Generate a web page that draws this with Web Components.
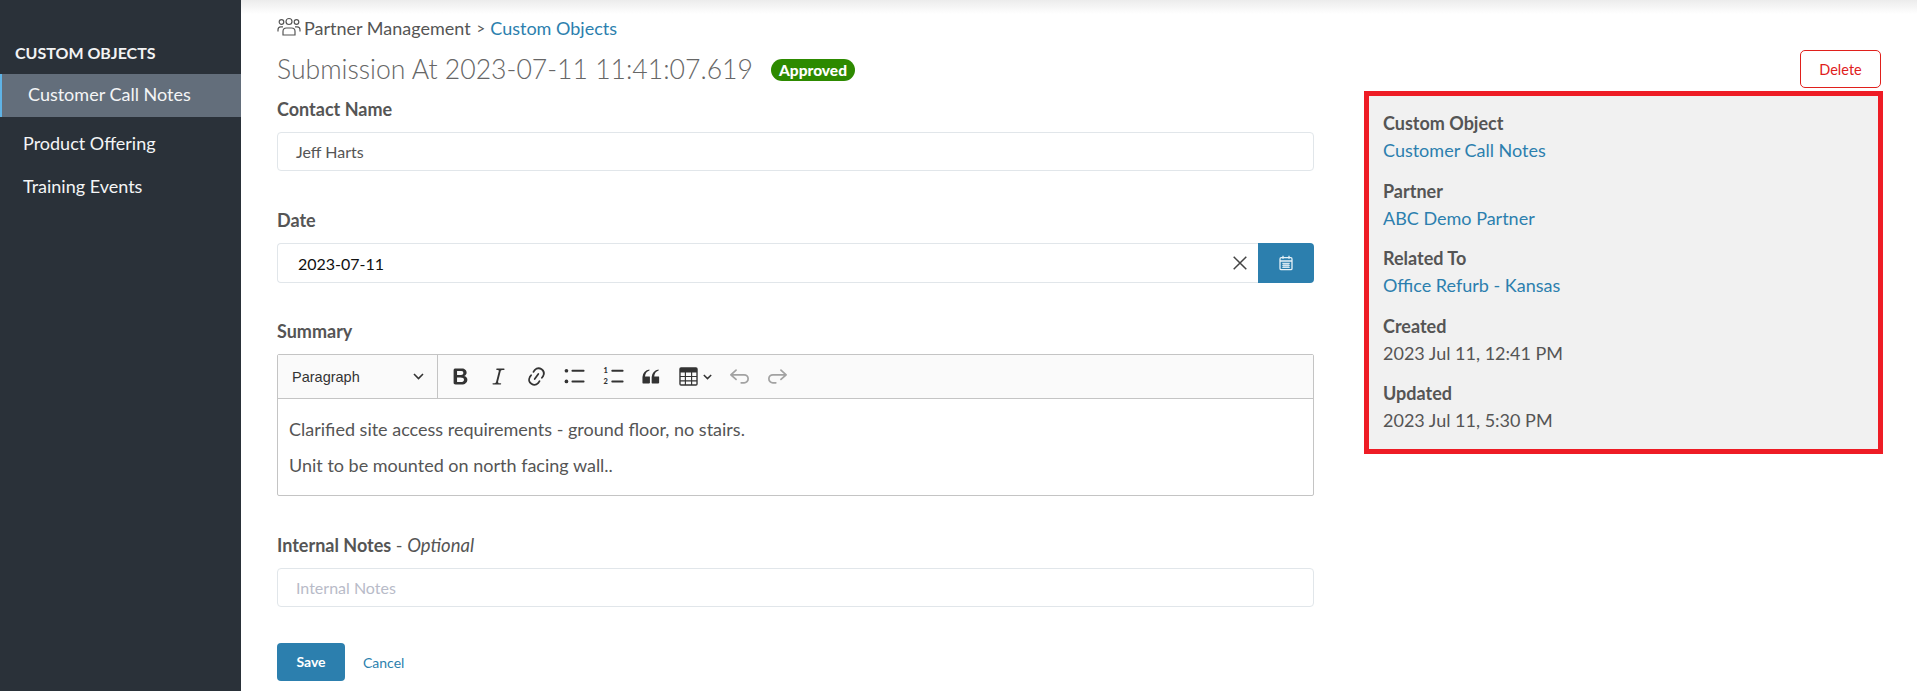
<!DOCTYPE html>
<html>
<head>
<meta charset="utf-8">
<title>Submission</title>
<style>
html,body{margin:0;height:100%;background:#fff;}
body{font-family:Lato,"Liberation Sans",sans-serif;font-size:16px;color:#555;overflow:hidden;}
</style>
</head>
<body>
<app-shell>
  <side-nav slot="nav" heading="CUSTOM OBJECTS">
    <nav-item active>Customer Call Notes</nav-item>
    <nav-item>Product Offering</nav-item>
    <nav-item>Training Events</nav-item>
  </side-nav>
  <bread-crumb slot="crumb" parent="Partner Management" current="Custom Objects"></bread-crumb>
  <page-title slot="title" badge="Approved">Submission At 2023-07-11 11:41:07.619</page-title>

  <form-field slot="form" label="Contact Name"><text-box value="Jeff Harts"></text-box></form-field>
  <form-field slot="form" label="Date" style="margin-bottom:37px"><date-box value="2023-07-11"></date-box></form-field>
  <form-field slot="form" label="Summary">
    <rich-editor>
      <p>Clarified site access requirements - ground floor, no stairs.</p>
      <p>Unit to be mounted on north facing wall..</p>
    </rich-editor>
  </form-field>
  <form-field slot="form" label="Internal Notes" hint="Optional"><text-box placeholder="Internal Notes"></text-box></form-field>
  <form-actions slot="form"></form-actions>

  <info-panel slot="aside">
    <info-row label="Custom Object" value="Customer Call Notes" link></info-row>
    <info-row label="Partner" value="ABC Demo Partner" link></info-row>
    <info-row label="Related To" value="Office Refurb - Kansas" link></info-row>
    <info-row label="Created" value="2023 Jul 11, 12:41 PM"></info-row>
    <info-row label="Updated" value="2023 Jul 11, 5:30 PM"></info-row>
  </info-panel>
</app-shell>

<script>
// little helper, every element below does the same thing in its constructor
class Base extends HTMLElement{
  constructor(html){
    super()
    this.attachShadow({mode:'open'})
    const t=document.createElement('template')
    t.innerHTML=html
    this.shadowRoot.appendChild(t.content.cloneNode(true))
  }
  attr(name,fallback=''){ return this.getAttribute(name)||fallback }
}

class AppShell extends Base{
  constructor(){
    super(`<style>
      :host{display:flex;height:691px;width:100%;}
      .nav{flex:0 0 241px;}
      .main{flex:1;display:flex;min-width:0;background:linear-gradient(#ececec,#fff 14px);}
      .left{flex:0 0 1037px;margin-left:36px;padding-top:16px;box-sizing:border-box;}
      .right{flex:0 0 519px;margin-left:50px;padding-top:50px;box-sizing:border-box;}
      .tools{display:flex;justify-content:flex-end;padding-right:2px;height:41px;}
      .del{box-sizing:border-box;width:81px;height:38px;border:1px solid #e0201c;border-radius:5px;background:#fff;color:#e0201c;
        font:14.5px Lato,sans-serif;display:flex;align-items:center;justify-content:center;}
    </style>
    <div class="nav"><slot name="nav"></slot></div>
    <div class="main">
      <div class="left"><slot name="crumb"></slot><slot name="title"></slot><slot name="form"></slot></div>
      <div class="right">
        <div class="tools"><div class="del">Delete</div></div>
        <slot name="aside"></slot>
      </div>
    </div>`)
  }
}

class SideNav extends Base{
  constructor(){
    super(`<style>
      :host{display:block;height:100%;background:#2a3139;color:#fff;padding-top:43px;box-sizing:border-box;}
      h4{margin:0;padding:0 0 0 15px;height:31px;line-height:20px;font-size:16px;font-weight:700;color:#f2f3f4;}
    </style><h4></h4><slot></slot>`)
  }
  connectedCallback(){ this.shadowRoot.querySelector('h4').textContent=this.attr('heading') }
}

class NavItem extends Base{
  constructor(){
    super(`<style>
      :host{display:block;height:43px;line-height:42px;padding-left:23px;color:#f4f5f6;font-size:18px;box-sizing:border-box;}
      :host([active]){background:#636e7b;border-left:2px solid #5fb3e6;padding-left:26px;line-height:41px;margin-bottom:5px;}
    </style><slot></slot>`)
  }
}

class BreadCrumb extends Base{
  constructor(){
    super(`<style>
      :host{display:flex;align-items:center;height:24px;font-size:18px;color:#555;}
      svg{width:24px;height:22px;margin-right:3px;}
      a{color:#2c7fae;margin-left:5px;}
      .sep{margin-left:6px;font-size:15px;}
    </style>
    <svg viewBox="0 0 24 22" fill="none" stroke="#555" stroke-width="1.2">
      <circle cx="4.5" cy="5" r="2.3"/><circle cx="12" cy="4.5" r="3"/><circle cx="19.5" cy="5" r="2.3"/>
      <path d="M1 14.5v-1.7c0-1.7 1.2-2.9 2.8-2.9h2.2"/><path d="M23 14.500v-1.700c0-1.700-1.200-2.900-2.800-2.900H18"/>
      <path d="M6 18v-3.600c0-2.200 1.500-3.400 3.400-3.400h5.200c1.900 0 3.400 1.200 3.400 3.400V18z"/>
    </svg><span class="p"></span><span class="sep">&gt;</span><a></a>`)
  }
  connectedCallback(){
    this.shadowRoot.querySelector('.p').textContent=this.attr('parent')
    this.shadowRoot.querySelector('a').textContent=this.attr('current')
  }
}

class PageTitle extends Base{
  constructor(){
    super(`<style>
      :host{display:flex;align-items:center;height:44px;margin-top:7px;margin-bottom:7px;color:#666;}
      h2{margin:0;font-size:26.6px;font-weight:300;white-space:nowrap;}
      .badge{margin-left:18px;margin-top:2px;background:#2d8a00;color:#fff;font-size:15.5px;font-weight:900;border-radius:11px;padding:0 8px;height:22px;line-height:22px;}
    </style><h2><slot></slot></h2><span class="badge"></span>`)
  }
  connectedCallback(){ this.shadowRoot.querySelector('.badge').textContent=this.attr('badge') }
}

class FormField extends Base{
  constructor(){
    super(`<style>
      :host{display:block;margin-bottom:38px;}
      label{display:block;height:24px;line-height:23px;margin-bottom:10px;font-size:18px;font-weight:700;color:#555;}
      span{font-weight:400;}
      i{font-weight:400;font-size:18.500px;}
    </style><label></label><slot></slot>`)
  }
  connectedCallback(){
    const l=this.shadowRoot.querySelector('label')
    l.textContent=this.attr('label')
    if(this.hasAttribute('hint')){
      const s=document.createElement('span')
      s.innerHTML=' - <i></i>'
      s.querySelector('i').textContent=this.attr('hint')
      l.appendChild(s)
    }
  }
}

class TextBox extends Base{
  constructor(){
    super(`<style>
      :host{display:block;}
      .box{box-sizing:border-box;height:39px;border:1px solid #e1e6ea;border-radius:4px;padding:0 18px;line-height:37px;font-size:16px;color:#555;}
      .ph{color:#b8bbc8;}
    </style><div class="box"></div>`)
  }
  connectedCallback(){
    const b=this.shadowRoot.querySelector('.box')
    if(this.hasAttribute('value')) b.textContent=this.attr('value')
    else{ b.textContent=this.attr('placeholder'); b.classList.add('ph') }
  }
}

class DateBox extends Base{
  constructor(){
    super(`<style>
      :host{display:flex;height:40px;}
      .box{flex:1;box-sizing:border-box;border:1px solid #e1e6ea;border-right:0;border-radius:4px 0 0 4px;padding:0 11px 0 20px;display:flex;align-items:center;justify-content:space-between;font-size:16px;color:#111;}
      .box svg{width:14px;height:14px;}
      .btn{flex:0 0 56px;background:#2c7fae;border-radius:0 4px 4px 0;display:flex;align-items:center;justify-content:center;}
      .btn svg{width:14px;height:16px;}
    </style>
    <div class="box"><span class="v"></span>
      <svg viewBox="0 0 14 14" fill="none" stroke="#444" stroke-width="1.5"><path d="M.7.7l12.600 12.600M13.300.7L.7 13.300"/></svg>
    </div>
    <div class="btn">
      <svg viewBox="0 0 14 16" fill="none" stroke="#e6f1f7" stroke-width="1.3">
        <rect x="1" y="2.700" width="12" height="12" rx="1.200"/>
        <path d="M1 6h12M4 .8v3M10 .8v3"/>
        <path stroke-width="1" d="M3.200 8.300h7.600M3.200 10.300h7.600M3.200 12.300h7.600M5 8v5M7 8v5M9 8v5"/>
      </svg>
    </div>`)
  }
  connectedCallback(){ this.shadowRoot.querySelector('.v').textContent=this.attr('value') }
}

class RichEditor extends Base{
  constructor(){
    super(`<style>
      :host{display:block;box-sizing:border-box;height:142px;border:1px solid #c4c4c4;border-radius:2px;}
      .bar{display:flex;height:44px;background:#fafafa;border-bottom:1px solid #c4c4c4;box-sizing:border-box;align-items:center;}
      .sel{box-sizing:border-box;flex:0 0 160px;height:100%;border-right:1px solid #c4c4c4;display:flex;align-items:center;justify-content:space-between;
        padding:0 13px 0 14px;font:14.5px "Liberation Sans",Arial,sans-serif;color:#333;}
      .icons{display:flex;align-items:center;padding-left:3px;}
      .ic{width:38px;height:36px;display:flex;align-items:center;justify-content:center;}
      .ic svg{width:23px;height:23px;fill:#333;flex:none;}
      .ic.wide{width:51px;justify-content:flex-start;padding-left:7.500px;box-sizing:border-box;}
      .ic.wide .caret{width:9px;height:6px;margin-left:3.500px;fill:none;stroke:#333;stroke-width:1.800;}
      .ic.off svg{fill:none;stroke:#a2a2a2;stroke-width:1.500;stroke-linecap:round;stroke-linejoin:round;}
      .body{padding:18px 11px 0;font-size:18px;color:#555;}
      ::slotted(p){margin:0 0 12px;line-height:24px;}
    </style>
    <div class="bar">
      <div class="sel"><span>Paragraph</span>
        <svg width="11" height="7" viewBox="0 0 11 7" fill="none" stroke="#333" stroke-width="1.600"><path d="M1 1l4.500 4.500L10 1"/></svg>
      </div>
      <div class="icons">
        <div class="ic"><svg viewBox="0 0 20 20"><path d="M10.187 17H5.773c-.637 0-1.092-.138-1.364-.415-.273-.277-.409-.718-.409-1.323V4.738c0-.617.14-1.062.419-1.332.279-.27.73-.406 1.354-.406h4.68c.69 0 1.288.041 1.793.124.506.083.96.242 1.36.478.341.197.644.447.906.75a3.262 3.262 0 0 1 .808 2.162c0 1.401-.722 2.426-2.167 3.075C15.05 10.175 16 11.315 16 13.01a3.756 3.756 0 0 1-2.296 3.504 6.1 6.1 0 0 1-1.517.377c-.571.073-1.238.11-2 .11zm-.217-6.217H7v4.087h3.069c1.977 0 2.965-.69 2.965-2.072 0-.707-.256-1.22-.768-1.537-.512-.319-1.277-.478-2.296-.478zM7 5.13v3.619h2.606c.729 0 1.292-.067 1.69-.2a1.6 1.6 0 0 0 .91-.765c.165-.267.247-.566.247-.897 0-.707-.26-1.176-.778-1.409-.519-.232-1.31-.348-2.375-.348H7z"/></svg></div>
        <div class="ic"><svg viewBox="0 0 20 20"><path d="m9.586 14.633.021.004c-.036.335.095.655.393.962.082.083.173.15.274.201h1.474a.6.6 0 1 1 0 1.2H5.304a.6.6 0 0 1 0-1.2h1.15c.474-.07.809-.182 1.005-.334.157-.122.291-.32.404-.597l2.416-9.55a1.053 1.053 0 0 0-.281-.823 1.12 1.12 0 0 0-.282-.2H8.6a.6.6 0 1 1 0-1.2h6.089a.6.6 0 1 1 0 1.2h-1.3c-.445.05-.77.169-.974.358-.194.18-.348.401-.463.667l-2.366 9.312z"/></svg></div>
        <div class="ic"><svg viewBox="0 0 20 20"><path d="m11.077 15 .991-1.416a.75.75 0 1 1 1.229.86l-1.148 1.64a.748.748 0 0 1-.217.206 5.251 5.251 0 0 1-8.503-5.955.741.741 0 0 1 .12-.274l1.147-1.639a.75.75 0 1 1 1.228.86L4.933 10.7l.006.003a3.75 3.75 0 0 0 6.132 4.294l.006.004zm5.494-5.335a.748.748 0 0 1-.12.274l-1.147 1.639a.75.75 0 1 1-1.228-.86l.86-1.23a3.75 3.75 0 0 0-6.144-4.301l-.86 1.229a.75.75 0 0 1-1.229-.86l1.148-1.64a.748.748 0 0 1 .217-.206 5.251 5.251 0 0 1 8.503 5.955zm-4.563-2.532a.75.75 0 0 1 .184 1.045l-3.155 4.505a.75.75 0 1 1-1.229-.86l3.155-4.506a.75.75 0 0 1 1.045-.184z"/></svg></div>
        <div class="ic"><svg viewBox="0 0 20 20"><circle cx="3" cy="5" r="1.600"/><circle cx="3" cy="14.300" r="1.600"/><rect x="7.400" y="4.100" width="11.300" height="1.800" rx=".7"/><rect x="7.400" y="13.400" width="11.300" height="1.800" rx=".7"/></svg></div>
        <div class="ic"><svg viewBox="0 0 20 20"><text x="2.200" y="7.300" font-size="6.500" font-weight="900" font-family="Lato,sans-serif">1</text><text x="2.200" y="16.700" font-size="6.500" font-weight="900" font-family="Lato,sans-serif">2</text><rect x="9" y="4.100" width="10.600" height="1.800" rx=".7"/><rect x="9" y="13.400" width="10.600" height="1.800" rx=".7"/></svg></div>
        <div class="ic"><svg viewBox="0 0 20 20"><path d="M3 10.423a6.5 6.5 0 0 1 6.056-6.408l.038.67C6.448 5.423 5.354 7.663 5.22 10H9c.552 0 .5.432.5.986v4.511c0 .554-.448.503-1 .503h-5c-.552 0-.5-.449-.5-1.003v-4.574zm8 0a6.5 6.5 0 0 1 6.056-6.408l.038.67c-2.646.739-3.74 2.979-3.873 5.315H17c.552 0 .5.432.5.986v4.511c0 .554-.448.503-1 .503h-5c-.552 0-.5-.449-.5-1.003v-4.574z"/></svg></div>
        <div class="ic wide">
          <svg viewBox="0 0 20 20"><path fill-rule="evenodd" d="M3.500 2h13A1.500 1.500 0 0 1 18 3.500v13a1.500 1.500 0 0 1-1.500 1.500h-13A1.500 1.500 0 0 1 2 16.500v-13A1.500 1.500 0 0 1 3.500 2zM3.200 6.500v3h3.600v-3zm4.600 0v3h4.400v-3zm5.400 0v3h3.600v-3zM3.200 10.500v2.800h3.600v-2.800zm4.600 0v2.800h4.400v-2.800zm5.400 0v2.800h3.600v-2.800zM3.200 14.300v2.500h3.600v-2.500zm4.600 0v2.500h4.400v-2.500zm5.400 0v2.500h3.600v-2.500z"/></svg>
          <svg class="caret" viewBox="0 0 11 7"><path d="M1 1l4.500 4.500L10 1"/></svg>
        </div>
        <div class="ic off"><svg viewBox="0 0 20 20"><path d="M7 4.500L2.500 8.500 7 12.500M2.800 8.500H14a3.500 3.500 0 0 1 0 7h-2.500"/></svg></div>
        <div class="ic off"><svg viewBox="0 0 20 20"><path d="M13 4.500l4.500 4-4.500 4M17.200 8.500H6a3.500 3.500 0 0 0 0 7h2.500"/></svg></div>
      </div>
    </div>
    <div class="body"><slot></slot></div>`)
  }
}

class FormActions extends Base{
  constructor(){
    super(`<style>
      :host{display:flex;align-items:center;margin-top:-2px;}
      .save{width:68px;height:38px;line-height:37px;text-align:center;background:#2c7fae;color:#fff;border-radius:4px;font-size:14px;font-weight:700;}
      a{margin-left:18px;color:#2c7fae;font-size:14px;}
    </style><div class="save">Save</div><a>Cancel</a>`)
  }
}

class InfoPanel extends Base{
  constructor(){
    super(`<style>
      :host{display:block;box-sizing:border-box;height:363px;border:5px solid #ee1c25;background:#f1f1f1;padding:14px 14px 0;}
    </style><slot></slot>`)
  }
}

class InfoRow extends Base{
  constructor(){
    super(`<style>
      :host{display:block;height:67.500px;font-size:18px;}
      .l{font-weight:700;color:#555;height:27px;line-height:27px;}
      .v{color:#555;height:27px;line-height:27px;}
      :host([link]) .v{color:#2c7fae;}
    </style><div class="l"></div><div class="v"></div>`)
  }
  connectedCallback(){
    this.shadowRoot.querySelector('.l').textContent=this.attr('label')
    this.shadowRoot.querySelector('.v').textContent=this.attr('value')
  }
}

customElements.define('app-shell',AppShell)
customElements.define('side-nav',SideNav)
customElements.define('nav-item',NavItem)
customElements.define('bread-crumb',BreadCrumb)
customElements.define('page-title',PageTitle)
customElements.define('form-field',FormField)
customElements.define('text-box',TextBox)
customElements.define('date-box',DateBox)
customElements.define('rich-editor',RichEditor)
customElements.define('form-actions',FormActions)
customElements.define('info-panel',InfoPanel)
customElements.define('info-row',InfoRow)
</script>
</body>
</html>
